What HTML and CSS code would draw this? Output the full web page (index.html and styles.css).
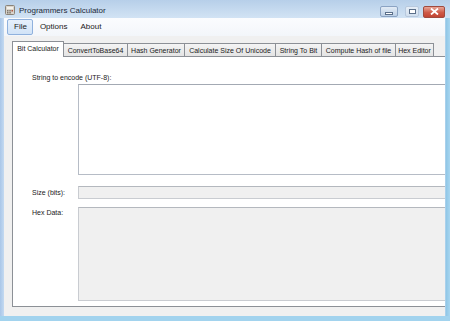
FILE: index.html
```html
<!DOCTYPE html>
<html>
<head>
<meta charset="utf-8">
<link rel="stylesheet" href="styles.css">
</head>
<body>
<div class="window">
  <div class="titlebar">
    <svg class="app-icon" width="10" height="10" viewBox="0 0 10 10">
      <rect x="0.5" y="0.5" width="9" height="9" rx="1" fill="#d9d4cc" stroke="#8a8378"/>
      <rect x="2" y="2" width="6" height="2" fill="#f4f1ea"/>
      <rect x="2" y="5" width="1.5" height="1.5" fill="#7d766c"/>
      <rect x="4.3" y="5" width="1.5" height="1.5" fill="#7d766c"/>
      <rect x="6.5" y="5" width="1.5" height="1.5" fill="#b0553e"/>
      <rect x="2" y="7" width="1.5" height="1.5" fill="#7d766c"/>
      <rect x="4.3" y="7" width="1.5" height="1.5" fill="#7d766c"/>
    </svg>
    <span class="title">Programmers Calculator</span>
    <div class="controls">
      <div class="btn btn-min"><span class="dash"></span></div>
      <div class="btn btn-max"><span class="box"></span></div>
      <div class="btn btn-close">
        <svg width="9" height="7" viewBox="0 0 9 7"><path d="M1 0.5 L8 6.5 M8 0.5 L1 6.5" stroke="#fff" stroke-width="1.8"/></svg>
      </div>
    </div>
  </div>
  <div class="client">
    <div class="menubar">
      <span class="menu-item active">File</span>
      <span class="menu-item">Options</span>
      <span class="menu-item">About</span>
    </div>
    <div class="tabctl">
      <div class="tabs">
        <div class="tab sel w-bit">Bit Calculator</div>
        <div class="tab w-b64">ConvertToBase64</div>
        <div class="tab w-hash">Hash Generator</div>
        <div class="tab w-calc">Calculate Size Of Unicode</div>
        <div class="tab w-str">String To Bit</div>
        <div class="tab w-comp">Compute Hash of file</div>
        <div class="tab w-hex">Hex Editor</div>
      </div>
      <div class="page">
        <div class="lbl-top">String to encode (UTF-8):</div>
        <div class="input big"></div>
        <div class="row row-size">
          <span class="lbl">Size (bits):</span>
          <div class="input disabled small"></div>
        </div>
        <div class="row row-hex">
          <span class="lbl">Hex Data:</span>
          <div class="input disabled hex"></div>
        </div>
      </div>
    </div>
  </div>
</div>
</body>
</html>
```

FILE: styles.css
```css
* { box-sizing: border-box; }
html, body { margin: 0; padding: 0; }
body {
  width: 450px;
  height: 321px;
  overflow: hidden;
  font-family: "Liberation Sans", Arial, sans-serif;
  color: #1a1a1a;
  background: #bcd4ee;
}
.window {
  width: 450px;
  height: 321px;
  display: flex;
  flex-direction: column;
  background: linear-gradient(90deg, #a9c6e8 0, #c4daf1 4px, #c4daf1 445px, #8fc6e6 446px, #a8d6f0 450px);
  border-bottom: 5px solid #a2d3ee;
}
.titlebar {
  height: 18px;
  display: flex;
  align-items: center;
  padding-left: 5px;
  background: linear-gradient(#b7cfe9, #d2e3f4);
  flex-shrink: 0;
}
.app-icon { margin-right: 4px; margin-top: 1px; }
.title {
  font-size: 8px;
  color: #1e2a3a;
  margin-top: 2px;
}
.controls {
  margin-left: auto;
  margin-right: 5px;
  display: flex;
  align-items: center;
  margin-top: 5px;
}
.btn {
  height: 11px;
  border-radius: 2px;
  display: flex;
  align-items: center;
  justify-content: center;
}
.btn-min {
  width: 18px;
  border: 1px solid #8ba3c3;
  background: linear-gradient(#e3ecf6, #bccfe5);
  margin-right: 7px;
}
.dash {
  width: 8px;
  height: 3px;
  border: 1px solid #5b6f8a;
  background: #fff;
  margin-top: 3px;
}
.btn-max {
  width: 14px;
  border: 1px solid #b8c9de;
  background: linear-gradient(#e6eef7, #d1dfee);
  margin-right: 4px;
}
.box {
  width: 7px;
  height: 5px;
  border: 1px solid #5b6f8a;
  background: #fff;
}
.btn-close {
  width: 22px;
  height: 12px;
  border: 1px solid #a04a3e;
  background: linear-gradient(#e8a596, #cf5a48 55%, #c24433);
}
.client {
  flex: 1;
  margin: 0 5px 0 4px;
  background: #f0f0f0;
  overflow: hidden;
}
.menubar {
  height: 18px;
  display: flex;
  align-items: center;
  padding-left: 3px;
  background: linear-gradient(#fbfcfe, #f3f6fa);
  font-size: 8px;
}
.menu-item {
  padding: 2px 5px 2px 6px;
  border: 1px solid transparent;
  line-height: 10px;
}
.menu-item.active {
  border-color: #8fb1dd;
  background: linear-gradient(#e6f0fb, #d1e3f7);
  border-radius: 2px;
}
.tabctl {
  margin: 4px -12px 0 8px;
}
.tabs {
  display: flex;
  align-items: flex-end;
  height: 16px;
  font-size: 7px;
}
.tab {
  height: 13px;
  border: 1px solid #8c9096;
  border-bottom: none;
  margin-right: -1px;
  background: linear-gradient(#f4f4f4, #e4e4e4);
  display: flex;
  align-items: center;
  justify-content: center;
  white-space: nowrap;
  padding-top: 1px;
}
.tab.sel {
  height: 16px;
  background: #fff;
  margin-bottom: -1px;
  position: relative;
  z-index: 1;
  padding-top: 0;
  padding-bottom: 2px;
}
.w-bit { width: 52px; }
.w-b64 { width: 65px; }
.w-hash { width: 58px; }
.w-calc { width: 92px; }
.w-str { width: 47px; }
.w-comp { width: 75px; }
.w-hex { width: 39px; }
.page {
  height: 251px;
  border: 1px solid #8c9096;
  background: #fff;
  padding: 16px 0 0 19px;
  font-size: 7px;
}
.lbl-top {
  line-height: 10px;
  height: 10px;
}
.input {
  border: 1px solid #b6bcc6;
  border-top-color: #a3a9b3;
  background: #fff;
}
.input.big {
  margin-left: 46px;
  margin-top: 1px;
  height: 91px;
}
.input.disabled {
  background: #f0f0f0;
  border-color: #c9ccd1;
  border-top-color: #b4b8be;
}
.row {
  display: flex;
  align-items: flex-start;
}
.lbl {
  width: 46px;
  flex-shrink: 0;
  line-height: 10px;
}
.row-size { margin-top: 11px; }
.row-size .lbl { margin-top: 2px; }
.input.small { flex: 1; height: 13px; }
.row-hex { margin-top: 8px; }
.row-hex .lbl { margin-top: 1px; }
.input.hex { flex: 1; height: 94px; }
```
